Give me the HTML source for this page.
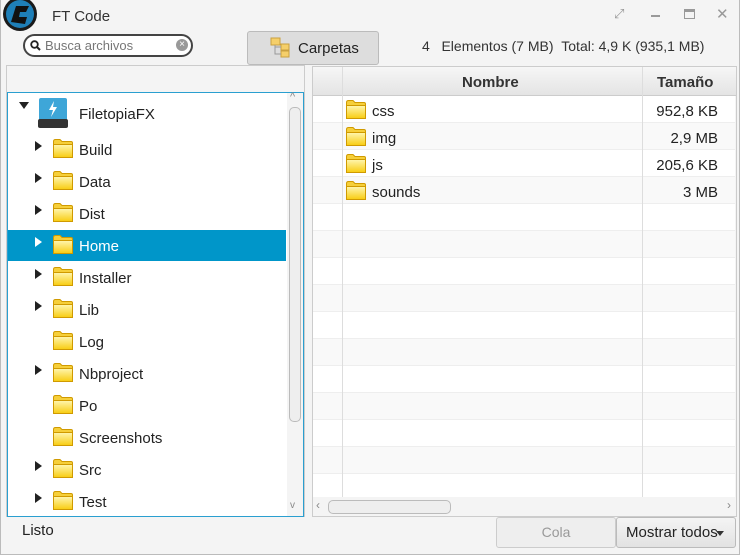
<!DOCTYPE html><html><head><style>
*{margin:0;padding:0;box-sizing:border-box}
body{width:740px;height:555px;background:#f4f4f4;font-family:"Liberation Sans",sans-serif;font-size:14px;color:#222;position:relative;overflow:hidden}
.a{position:absolute}
.fold{position:absolute;width:22px;height:21px}
.tri{position:absolute;width:0;height:0;border-top:5px solid transparent;border-bottom:5px solid transparent;border-left:7px solid #222}
.row{position:absolute;left:8px;width:278px;height:31px}
.tr{position:absolute;left:313px;width:422px;height:27px;border-bottom:1px solid #eee}
</style></head><body>
<svg width="0" height="0" style="position:absolute"><defs><linearGradient id="fg" x1="0" y1="0" x2="0" y2="1"><stop offset="0" stop-color="#fff6b0"/><stop offset="1" stop-color="#f8cc10"/></linearGradient></defs></svg>
<div class="a" style="left:0;top:0;width:740px;height:555px;border:1px solid #bbb;border-top:none"></div>
<svg class="a" style="left:2px;top:0" width="36" height="32"><circle cx="18" cy="14" r="17" fill="#1a1a1a"/><circle cx="18" cy="14" r="14" fill="#1e7fb8"/><path d="M9 22 L14 6 L27 6 L24 12 L18 12 L17 17 L25 17 L23 24 Z" fill="#111"/></svg>
<div class="a" style="left:52px;top:8px;font-size:15px;color:#333">FT Code</div>
<div class="a" style="left:614px;top:6px;color:#999;font-size:13px">⤢</div>
<div class="a" style="left:651px;top:15px;width:9px;height:2px;background:#999"></div>
<div class="a" style="left:684px;top:9px;width:11px;height:10px;border:1.5px solid #999;border-top-width:3px"></div>
<div class="a" style="left:716px;top:5px;color:#999;font-size:15px">✕</div>
<div class="a" style="left:23px;top:34px;width:170px;height:23px;border:2px solid #444;border-radius:12px;background:#fff"></div>
<svg class="a" style="left:30px;top:40px" width="11" height="11"><circle cx="4.5" cy="4.5" r="3.3" stroke="#222" stroke-width="1.8" fill="none"/><line x1="7" y1="7" x2="10" y2="10" stroke="#222" stroke-width="2"/></svg>
<div class="a" style="left:45px;top:38px;font-size:13px;color:#777">Busca archivos</div>
<div class="a" style="left:176px;top:39px;width:12px;height:12px;border-radius:6px;background:#999;color:#fff;font-size:10px;line-height:12px;text-align:center">×</div>
<div class="a" style="left:247px;top:31px;width:132px;height:34px;background:#ddd;border:1px solid #bbb;border-radius:3px"></div>
<svg class="a" style="left:270px;top:37px" width="24" height="22"><rect x="1" y="1" width="9" height="7" fill="#f5cf6a" stroke="#c9a040"/><rect x="11" y="7" width="8" height="6" fill="#f5cf6a" stroke="#c9a040"/><rect x="11" y="14" width="8" height="6" fill="#f5cf6a" stroke="#c9a040"/><path d="M5 8V17H11M5 10H11" stroke="#999" fill="none"/></svg>
<div class="a" style="left:298px;top:40px;font-size:15px">Carpetas</div>
<div class="a" style="left:422px;top:38px;font-size:14px;color:#333">4&nbsp;&nbsp;&nbsp;Elementos (7 MB)&nbsp;&nbsp;Total: 4,9 K (935,1 MB)</div>
<div class="a" style="left:6px;top:65px;width:299px;height:452px;border:1px solid #ccc;background:#f4f4f4"></div>
<div class="a" style="left:7px;top:92px;width:297px;height:425px;border:1px solid #2a9fd0;background:#fff"></div>
<div class="a" style="left:287px;top:93px;width:16px;height:423px;background:#f4f4f4"></div>
<div class="a" style="left:289px;top:107px;width:12px;height:315px;background:#eee;border:1px solid #bbb;border-radius:5px"></div>
<div class="a" style="left:290px;top:91px;color:#888;font-size:11px">^</div>
<div class="a" style="left:290px;top:500px;color:#888;font-size:10px">v</div>
<div class="row" style="top:230px;background:#0096c9"></div>
<div class="tri" style="left:19px;top:102px;border:none;border-left:5px solid transparent;border-right:5px solid transparent;border-top:7px solid #222"></div>
<svg class="a" style="left:37px;top:97px" width="32" height="32"><rect x="2" y="1" width="28" height="24" rx="2" fill="#3ea6d8"/><rect x="1" y="22" width="30" height="9" rx="2" fill="#333"/><path d="M17 4L12 13H16L14 20L20 10H16Z" fill="#fff"/></svg>
<div class="a" style="left:79px;top:106px;font-size:15px">FiletopiaFX</div>
<div id="tree"></div>
<script>
var F='viewBox="0 0 22 21"><path d="M1.5 3.5Q1.5 1.5 3.5 1.5H8L10 3.5H19Q20.5 3.5 20.5 5V19.5H1.5Z" fill="#f6cf3a" stroke="#d09a00"/><rect x="1.5" y="6.5" width="19" height="13" fill="url(#fg)" stroke="#d09a00"/></svg>';
var n=[["Build",1],["Data",1],["Dist",1],["Home",1],["Installer",1],["Lib",1],["Log",0],["Nbproject",1],["Po",0],["Screenshots",0],["Src",1],["Test",1]];
var h="";n.forEach(function(e,i){var y=134+i*32;var sel=e[0]=="Home";
if(e[1])h+='<div class="tri" style="left:35px;top:'+(y+7)+'px;border-left-color:'+(sel?'#fff':'#222')+'"></div>';
h+='<svg class="fold" style="left:52px;top:'+(y+4)+'px" '+F;
h+='<div class="a" style="left:79px;top:'+(y+8)+'px;font-size:15px;color:'+(sel?'#fff':'#222')+'">'+e[0]+'</div>';});
var r=[["css","952,8 KB"],["img","2,9 MB"],["js","205,6 KB"],["sounds","3 MB"]];
for(var i=0;i<15;i++){var y=96+i*27;h+='<div class="tr" style="top:'+y+'px;background:'+(i%2?'#f9f9f9':'#fff')+'"></div>';
if(r[i]){h+='<svg class="fold" style="left:345px;top:'+(y+3)+'px" '+F+'<div class="a" style="left:372px;top:'+(y+7)+'px;font-size:15px">'+r[i][0]+'</div><div class="a" style="left:642px;width:76px;text-align:right;top:'+(y+7)+'px;font-size:15px">'+r[i][1]+'</div>';}}
document.getElementById("tree").innerHTML=h;
</script>
<div class="a" style="left:312px;top:66px;width:425px;height:451px;border:1px solid #ccc"></div>
<div class="a" style="left:313px;top:67px;width:423px;height:29px;background:linear-gradient(#f6f6f6,#e4e4e4);border-bottom:1px solid #ccc"></div>
<div class="a" style="left:342px;top:67px;width:1px;height:430px;background:#ddd"></div>
<div class="a" style="left:642px;top:67px;width:1px;height:430px;background:#ddd"></div>
<div class="a" style="left:462px;top:74px;font-weight:bold;font-size:15px;color:#333">Nombre</div>
<div class="a" style="left:657px;top:74px;font-weight:bold;font-size:15px;color:#333">Tamaño</div>
<div class="a" style="left:313px;top:497px;width:423px;height:19px;background:#f4f4f4"></div>
<div class="a" style="left:328px;top:500px;width:123px;height:14px;background:#eee;border:1px solid #bbb;border-radius:5px"></div>
<div class="a" style="left:316px;top:498px;color:#888;font-size:12px">‹</div>
<div class="a" style="left:727px;top:498px;color:#888;font-size:12px">›</div>
<div class="a" style="left:22px;top:522px;font-size:15px">Listo</div>
<div class="a" style="left:496px;top:517px;width:120px;height:31px;background:#eee;border:1px solid #ccc;border-radius:3px;color:#999;font-size:14px;text-align:center;line-height:29px">Cola</div>
<div class="a" style="left:616px;top:517px;width:120px;height:31px;background:linear-gradient(#f4f4f4,#e2e2e2);border:1px solid #bbb;border-radius:3px;font-size:15px;padding-left:9px;line-height:29px">Mostrar todos</div>
<div class="a" style="left:716px;top:531px;border-left:4px solid transparent;border-right:4px solid transparent;border-top:5px solid #333"></div>
</body></html>
